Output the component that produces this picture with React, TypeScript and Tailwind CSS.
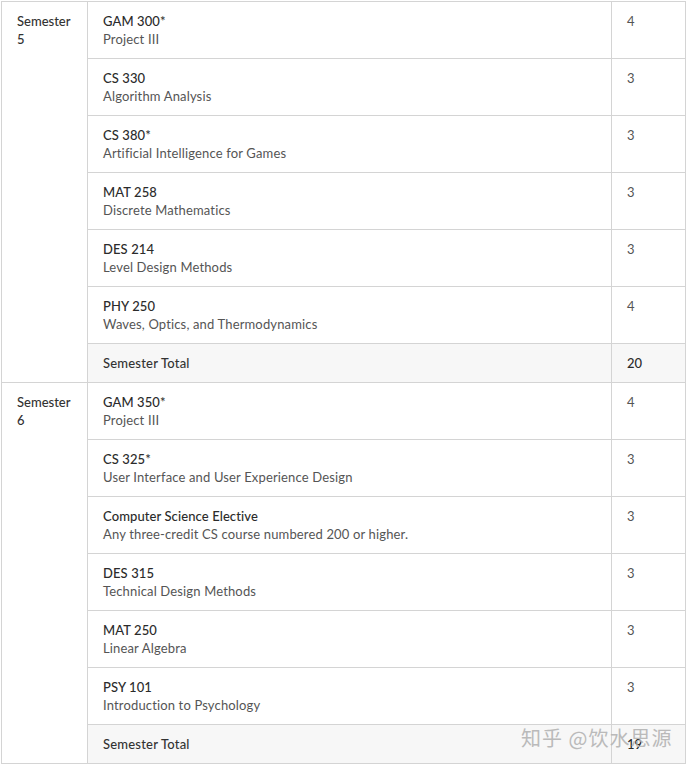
import React from 'react';

interface Course {
  code: string;
  title: string;
  credits: number;
}

interface Semester {
  label: string;
  courses: Course[];
  total: number;
}

const semesters: Semester[] = [
  {
    label: '5',
    total: 20,
    courses: [
      { code: 'GAM 300*', title: 'Project III', credits: 4 },
      { code: 'CS 330', title: 'Algorithm Analysis', credits: 3 },
      { code: 'CS 380*', title: 'Artificial Intelligence for Games', credits: 3 },
      { code: 'MAT 258', title: 'Discrete Mathematics', credits: 3 },
      { code: 'DES 214', title: 'Level Design Methods', credits: 3 },
      { code: 'PHY 250', title: 'Waves, Optics, and Thermodynamics', credits: 4 },
    ],
  },
  {
    label: '6',
    total: 19,
    courses: [
      { code: 'GAM 350*', title: 'Project III', credits: 4 },
      { code: 'CS 325*', title: 'User Interface and User Experience Design', credits: 3 },
      { code: 'Computer Science Elective', title: 'Any three-credit CS course numbered 200 or higher.', credits: 3 },
      { code: 'DES 315', title: 'Technical Design Methods', credits: 3 },
      { code: 'MAT 250', title: 'Linear Algebra', credits: 3 },
      { code: 'PSY 101', title: 'Introduction to Psychology', credits: 3 },
    ],
  },
];

const cell = 'border border-[#d4d4d4] px-[15px] py-[10px] align-top';

export default function App() {
  return (
    <div
      className="relative min-h-[765px] bg-white pl-px pt-px text-[13px] leading-[18px] text-[#555]"
      style={{ fontFamily: 'Lato, "Open Sans", Arial, sans-serif' }}
    >
      <table className="w-[684px] table-fixed border-collapse">
        <colgroup>
          <col className="w-[86px]" />
          <col className="w-[524px]" />
          <col className="w-[74px]" />
        </colgroup>
        <tbody>
          {semesters.map((sem) => (
            <React.Fragment key={sem.label}>
              {sem.courses.map((c, i) => (
                <tr key={c.code}>
                  {i === 0 && (
                    <td rowSpan={sem.courses.length + 1} className={`${cell} font-medium text-[#333]`}>
                      Semester
                      <br />
                      {sem.label}
                    </td>
                  )}
                  <td className={cell}>
                    <div className="font-medium tracking-[0.1px] text-[#2b2b2b]">{c.code}</div>
                    <div className="tracking-[0.15px]">{c.title}</div>
                  </td>
                  <td className={`${cell} text-[#555]`}>{c.credits}</td>
                </tr>
              ))}
              <tr className="bg-[#f7f7f7]">
                <td className={`${cell} align-middle font-medium tracking-[0.2px] text-[#333]`}>Semester Total</td>
                <td className={`${cell} align-middle font-medium text-[#2b2b2b]`}>{sem.total}</td>
              </tr>
            </React.Fragment>
          ))}
        </tbody>
      </table>

      <div
        className="absolute left-[521px] top-[724px] text-[20px] leading-[28px] tracking-[1px] text-[#b4b4b4] opacity-90"
        style={{ fontFamily: '"Noto Sans CJK SC", sans-serif' }}
      >
        知乎 @饮水思源
      </div>
    </div>
  );
}
